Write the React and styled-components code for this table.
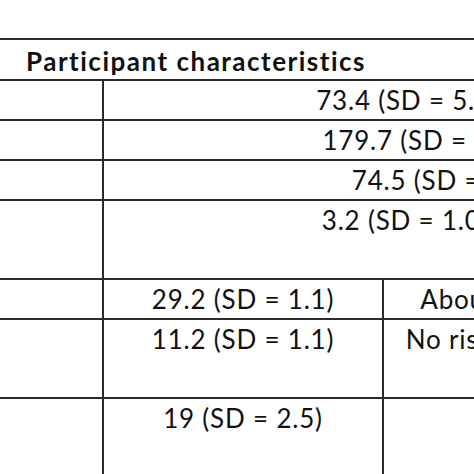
import React from 'react'
import styled, { createGlobalStyle } from 'styled-components'

const GlobalStyle = createGlobalStyle`
  html, body {
    margin: 0;
    padding: 0;
    background: #ffffff;
    overflow: hidden;
  }
  body {
    width: 474px;
    height: 474px;
  }
`

const Page = styled.div`
  width: 474px;
  height: 474px;
  padding-top: 38px;
  box-sizing: border-box;
  overflow: hidden;
  background: #ffffff;
`

const Table = styled.table`
  border-collapse: collapse;
  table-layout: fixed;
  width: 783px;
  font-family: Lato, "Open Sans", sans-serif;
  color: #111111;
`

const Row = styled.tr`
  height: ${({ $tall }) => ($tall ? '79px' : '40px')};
`

const HeadCell = styled.th`
  height: 35px;
  padding: 3px 0 0 26px;
  border-top: 2px solid #2b2b2b;
  border-bottom: 2px solid #2b2b2b;
  text-align: left;
  vertical-align: top;
  font-size: 26px;
  font-weight: 700;
  letter-spacing: 1.5px;
  line-height: 36px;
  white-space: nowrap;
`

const Cell = styled.td`
  padding: 5px 0 0;
  border: 2px solid #2b2b2b;
  border-left: ${({ $first }) => ($first ? 'none' : '2px solid #2b2b2b')};
  text-align: center;
  vertical-align: top;
  font-size: 26px;
  letter-spacing: 0.8px;
  line-height: 29px;
  white-space: nowrap;
  overflow: hidden;
`

const rows = [
  { value: '73.4 (SD = 5.2) years' },
  { value: '179.7 (SD = 6.1) cm' },
  { value: '74.5 (SD = 8.3)' },
  { value: '3.2 (SD = 1.0) hours', tall: true }
]

const splitRows = [
  { left: '29.2 (SD = 1.1)', right: 'About average', extra: '' },
  { left: '11.2 (SD = 1.1)', right: 'No risk indicated', extra: '', tall: true },
  { left: '19 (SD = 2.5)', right: '', extra: '', tall: true }
]

export default function App () {
  return (
    <Page>
      <GlobalStyle />
      <Table>
        <colgroup>
          <col style={{ width: 103 }} />
          <col style={{ width: 280 }} />
          <col style={{ width: 251 }} />
          <col style={{ width: 149 }} />
        </colgroup>
        <tbody>
          <tr>
            <HeadCell colSpan={4}>Participant characteristics</HeadCell>
          </tr>
          {rows.map(row => (
            <Row key={row.value} $tall={row.tall}>
              <Cell $first />
              <Cell colSpan={3}>{row.value}</Cell>
            </Row>
          ))}
          {splitRows.map(row => (
            <Row key={row.left} $tall={row.tall}>
              <Cell $first />
              <Cell>{row.left}</Cell>
              <Cell>{row.right}</Cell>
              <Cell>{row.extra}</Cell>
            </Row>
          ))}
        </tbody>
      </Table>
    </Page>
  )
}
